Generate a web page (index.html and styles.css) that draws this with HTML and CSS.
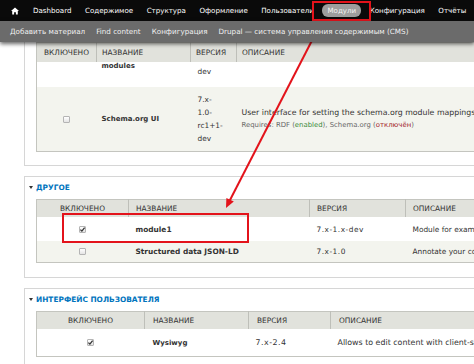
FILE: index.html
```html
<!DOCTYPE html>
<html lang="ru">
<head>
  <meta charset="UTF-8" />
  <meta name="viewport" content="width=device-width, initial-scale=1.0"/>
  <title>Модули | Drupal</title>
  <link rel="stylesheet" href="styles.css">
</head>
<body>
  <div class="page">
    <!-- Admin toolbar -->
    <div class="toolbar">
      <span class="home">
        <svg width="8" height="8" viewBox="0 0 8 8"><path d="M4 0.4 L8 4 H6.8 V7.6 H4.9 V5.3 H3.1 V7.6 H1.2 V4 H0 Z" fill="#fff"/></svg>
      </span>
      <a class="tb-link">Dashboard</a>
      <a class="tb-link">Содержимое</a>
      <a class="tb-link">Структура</a>
      <a class="tb-link">Оформление</a>
      <a class="tb-link">Пользователи</a>
      <a class="tb-link active">Модули</a>
      <a class="tb-link">Конфигурация</a>
      <a class="tb-link">Отчёты</a>
    </div>

    <!-- Shortcuts -->
    <div class="shortcuts">
      <a class="sc-link">Добавить материал</a>
      <a class="sc-link">Find content</a>
      <a class="sc-link">Конфигурация</a>
      <a class="sc-link">Drupal — система управления содержимым (CMS)</a>
    </div>

    <div class="content">
      <!-- scrolled group, top is out of view -->
      <div class="group group-cut">
        <table class="modules mod-a">
          <colgroup><col class="c1"><col class="c2"><col class="c3"><col class="c4"></colgroup>
          <thead>
            <tr><th class="en">Включено</th><th>Название</th><th>Версия</th><th>Описание</th></tr>
          </thead>
          <tbody>
            <tr class="even row-cut">
              <td></td>
              <td class="name">modules</td>
              <td class="ver">dev</td>
              <td></td>
            </tr>
            <tr class="odd row-tall">
              <td class="en"><span class="check"></span></td>
              <td class="name">Schema.org UI</td>
              <td class="ver">7.x-<wbr>1.0-<wbr>rc1+1-<wbr>dev</td>
              <td class="desc">
                User interface for setting the schema.org module mappings.
                <div class="requires">Requires: RDF (<span class="ok">enabled</span>), Schema.org (<span class="off">отключён</span>)</div>
              </td>
            </tr>
          </tbody>
        </table>
      </div>

      <div class="group">
        <div class="legend">Другое</div>
        <table class="modules mod-b">
          <colgroup><col class="c1"><col class="c2"><col class="c3"><col class="c4"></colgroup>
          <thead>
            <tr><th class="en">Включено</th><th>Название</th><th>Версия</th><th>Описание</th></tr>
          </thead>
          <tbody>
            <tr class="even">
              <td class="en"><span class="check is-on"><svg width="7" height="7" viewBox="0 0 7 7"><path d="M1.4 3.6 L2.9 5.1 L5.6 1.6" fill="none" stroke="#333" stroke-width="1.3"/></svg></span></td>
              <td class="name">module1</td>
              <td class="ver">7.x-1.x-dev</td>
              <td>Module for example purposes</td>
            </tr>
            <tr class="odd">
              <td class="en"><span class="check"></span></td>
              <td class="name">Structured data JSON-LD</td>
              <td class="ver">7.x-1.0</td>
              <td>Annotate your content with structured data</td>
            </tr>
          </tbody>
        </table>
      </div>

      <div class="group">
        <div class="legend">Интерфейс пользователя</div>
        <table class="modules mod-c">
          <colgroup><col class="c1"><col class="c2"><col class="c3"><col class="c4"></colgroup>
          <thead>
            <tr><th class="en">Включено</th><th>Название</th><th>Версия</th><th>Описание</th></tr>
          </thead>
          <tbody>
            <tr class="even">
              <td class="en"><span class="check is-on"><svg width="7" height="7" viewBox="0 0 7 7"><path d="M1.4 3.6 L2.9 5.1 L5.6 1.6" fill="none" stroke="#333" stroke-width="1.3"/></svg></span></td>
              <td class="name">Wysiwyg</td>
              <td class="ver">7.x-2.4</td>
              <td>Allows to edit content with client-side editors.</td>
            </tr>
          </tbody>
        </table>
      </div>
    </div>

    <!-- red annotations drawn over the screenshot -->
    <svg class="marks" width="474" height="364" viewBox="0 0 474 364">
      <rect x="313" y="2" width="57" height="18" fill="none" stroke="#e3131b" stroke-width="2"/>
      <line x1="322" y1="21" x2="229.5" y2="201" stroke="#e3131b" stroke-width="2"/>
      <polygon points="226,208 233.8,201.6 226.4,197.9" fill="#e3131b"/>
      <rect x="63" y="214" width="185" height="28" fill="none" stroke="#e3131b" stroke-width="2"/>
    </svg>
  </div>
</body>
</html>
```

FILE: styles.css
```css
body {
  margin: 0;
  font-family: "DejaVu Sans", Verdana, sans-serif;
  font-size: 7.4px;
  color: #333;
  background: #fff;
  overflow: hidden;
}

.page {
  position: relative;
  width: 474px;
  height: 364px;
  overflow: hidden;
}

/* toolbar */
.toolbar {
  display: flex;
  align-items: center;
  gap: 13.5px;
  height: 21px;
  padding-left: 11px;
  background-color: #0a0a0a;
  color: #fff;
  font-size: 7.1px;
  white-space: nowrap;
}

.home {
  display: flex;
  width: 8px;
  height: 8px;
  margin-right: 0.5px;
}

.tb-link.active {
  padding: 2px 5px;
  margin: 0 -5px;
  border-radius: 6px;
  background-color: #9d9d9d;
  color: #f4f4f4;
}

.shortcuts {
  position: relative;
  z-index: 2;
  display: flex;
  align-items: center;
  gap: 11px;
  height: 21px;
  padding-left: 10px;
  background-color: #6b6b6b;
  color: #f0f0f0;
  font-size: 7.2px;
  white-space: nowrap;
  box-shadow: 0 2px 4px rgba(0, 0, 0, 0.6);
}

/* module groups */
.content {
  width: 640px;
}

.group {
  margin: 0 0 10px 24px;
  padding: 0 0 14px 11px;
  border: 1px solid #d6d6d6;
}

.group-cut {
  border-top: none;
  padding-bottom: 13px;
}

.legend {
  position: relative;
  height: 22px;
  line-height: 21px;
  margin-left: -7px;
  padding-left: 7px;
  color: #0074bd;
  font-weight: bold;
  text-transform: uppercase;
}

.legend::before {
  content: "";
  position: absolute;
  left: 0;
  top: 9px;
  border-left: 2.5px solid transparent;
  border-right: 2.5px solid transparent;
  border-top: 3px solid #333;
}

.modules {
  width: 560px;
  table-layout: fixed;
  border-collapse: collapse;
  border: 1px solid #c4c5bf;
}

.modules th {
  padding: 0 0 0 7px;
  background-color: #e1e2dc;
  border-right: 1px solid #bebfb9;
  font-weight: normal;
  text-align: left;
  text-transform: uppercase;
}

.modules td {
  padding: 0 0 0 7px;
  vertical-align: middle;
  white-space: nowrap;
}

.modules th.en,
.modules td.en {
  padding: 0;
  text-align: center;
}

.modules .name {
  font-weight: bold;
}

.modules .ver {
  letter-spacing: 0.5px;
}

.modules tr.even { background-color: #fff; }
.modules tr.odd { background-color: #f3f4ee; }

.check {
  display: inline-block;
  width: 7px;
  height: 7px;
  box-sizing: border-box;
  border: 1px solid #b4b4b4;
  border-radius: 1px;
  background: linear-gradient(#fff, #e4e4e4);
  vertical-align: middle;
  position: relative;
}

.check svg {
  position: absolute;
  left: -1px;
  top: -1px;
}

/* first table */
.mod-a .c1 { width: 60px; }
.mod-a .c2 { width: 94px; }
.mod-a .c3 { width: 46px; }
.mod-a th { height: 19px; padding-left: 5px; }
.mod-a th.en { padding-left: 0; }
.mod-a td { padding-left: 5px; }
.mod-a .name { font-size: 7px; }

.mod-a .ver {
  white-space: normal;
  line-height: 13px;
  padding: 0 18px 0 7px;
  letter-spacing: 0;
}

.mod-a .desc {
  padding-left: 5px;
  line-height: 13px;
  font-size: 7.8px;
}

.row-cut td {
  height: 22px;
  vertical-align: top;
}

.row-cut .name { line-height: 8px; }
.row-cut .ver { padding-top: 3px; }

.row-tall td { height: 64px; }

.requires {
  font-size: 6.9px;
  color: #666;
}

.requires .ok { color: #3a8a3a; }
.requires .off { color: #a2191e; }

/* second table */
.mod-b .c1 { width: 92px; }
.mod-b .c2 { width: 181px; }
.mod-b .c3 { width: 96px; }
.mod-b th { height: 17px; }
.mod-b tr.even td { height: 24px; }
.mod-b tr.odd td { height: 21px; }

/* third table */
.mod-c .c1 { width: 108px; }
.mod-c .c2 { width: 104px; }
.mod-c .c3 { width: 82px; }
.mod-c th { height: 17px; padding-left: 8px; }
.mod-c th.en { padding-left: 0; }
.mod-c td { height: 27px; font-size: 7.9px; }
.mod-c td.name { padding-left: 8px; font-size: 7px; }

.marks {
  position: absolute;
  left: 0;
  top: 0;
  pointer-events: none;
}
```
